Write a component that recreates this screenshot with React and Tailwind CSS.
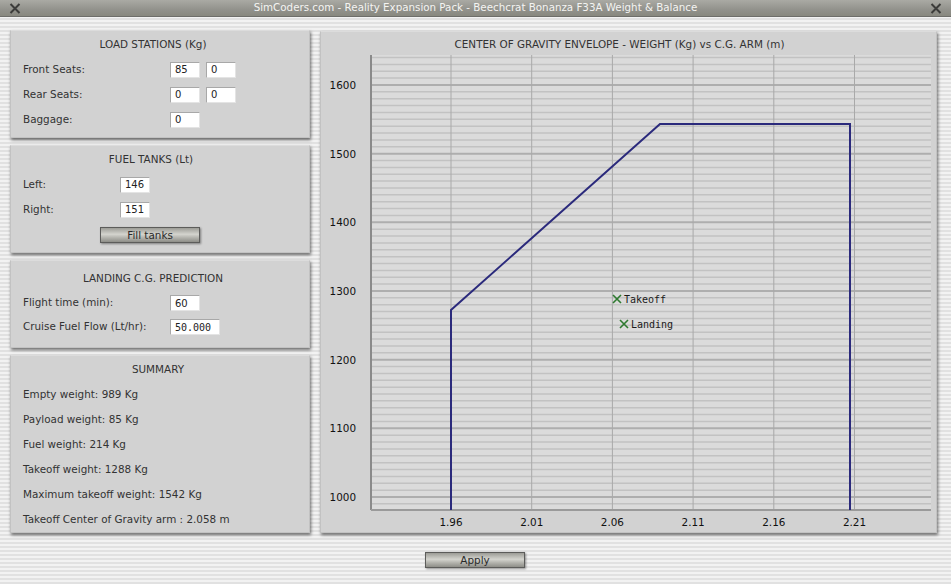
import React from "react"

const sans = "font-['DejaVu_Sans','Verdana',sans-serif]"
const mono = "font-['DejaVu_Sans_Mono','Liberation_Mono',monospace]"

// chart geometry (svg coords, origin = plot top-left minus 50px gutter)
const PL = 50
const PR = 610
const PT = 0
const PB = 455
const yOf = (w) => 442 - (w - 1000) * 0.6867
const xOf = (a) => 130 + (a - 1.96) * 1614

function TitleX() {
  return (
    <svg width="12" height="11" viewBox="0 0 12 11">
      <path d="M1.5 1 L10.5 10 M10.5 1 L1.5 10" stroke="#3c3c3a" strokeWidth="2" fill="none" />
    </svg>
  )
}

function Field({ value, w = "w-[30px]", font = sans }) {
  return (
    <input
      readOnly
      value={value}
      className={`${w} h-[16px] ${font} text-[10px] text-[#222] bg-white px-[4px] border border-[#a8a8a8] border-r-[#e4e4e4] border-b-[#e4e4e4] outline-none`}
    />
  )
}

function Panel({ className = "", children }) {
  return (
    <div className={`bg-[#d2d2d2] border border-[#c2c2c2] border-t-[#dcdcdc] shadow-[1px_2px_3px_rgba(0,0,0,0.55)] ${className}`}>
      {children}
    </div>
  )
}

function Btn({ children, w }) {
  return (
    <button className={`${w} h-[16px] text-[10.4px] leading-none text-[#2a2a2a] border border-[#5c5c5a] bg-[linear-gradient(#9c9c96,#d4d4ce_45%,#b2b2ac_70%,#8e8e88)] shadow-[1px_1px_2px_rgba(0,0,0,0.4)]`}>
      {children}
    </button>
  )
}

function Row({ label, labelW, children, h = "h-[25px]" }) {
  return (
    <div className={`${h} flex items-center px-[12px]`}>
      <div className={labelW}>{label}</div>
      <div className="flex gap-[6px]">{children}</div>
    </div>
  )
}

function Chart() {
  const minor = []
  for (let w = 990; w <= 1640; w += 10) minor.push(w)
  const xs = [1.96, 2.01, 2.06, 2.11, 2.16, 2.21]
  const env = [
    [130, PB],
    [130, 255],
    [339, 69],
    [529, 69],
    [529, PB],
  ]
  return (
    <svg width="617" height="478" className={sans}>
      <rect x={PL} y={PT} width={PR - PL} height={PB - PT} fill="#dbdbdb" />
      {minor.map((w) => (
        <line
          key={w}
          x1={PL}
          x2={PR}
          y1={yOf(w)}
          y2={yOf(w)}
          stroke={w % 100 === 0 ? "#aeaeae" : "#c2c2c2"}
          strokeWidth={w % 100 === 0 ? 2 : 1.5}
        />
      ))}
      {xs.map((a) => (
        <line key={a} x1={xOf(a)} x2={xOf(a)} y1={PT} y2={PB} stroke="#a9a9a9" strokeWidth="1" />
      ))}
      <line x1={PL} x2={PL} y1={PT} y2={PB} stroke="#8a8a8a" strokeWidth="2" />
      <line x1={PL} x2={PR} y1={PB} y2={PB} stroke="#9a9a9a" strokeWidth="2" />
      <polyline
        points={env.map((p) => p.join(",")).join(" ")}
        fill="none"
        stroke="#2b2a7c"
        strokeWidth="2"
      />
      {[1600, 1500, 1400, 1300, 1200, 1100, 1000].map((w) => (
        <text key={w} x="35" y={yOf(w) + 4} textAnchor="end" fontSize="10.4" fill="#111">
          {w}
        </text>
      ))}
      {xs.map((a) => (
        <text key={a} x={xOf(a)} y="471" textAnchor="middle" fontSize="10.4" fill="#111">
          {a.toFixed(2)}
        </text>
      ))}
      <path d="M292 240 L300 248 M300 240 L292 248" stroke="#2e7a30" strokeWidth="1.6" />
      <text x="303" y="248" fontSize="10" fill="#1a1a1a" className={mono}>
        Takeoff
      </text>
      <path d="M299 265 L307 273 M307 265 L299 273" stroke="#2e7a30" strokeWidth="1.6" />
      <text x="310" y="273" fontSize="10" fill="#1a1a1a" className={mono}>
        Landing
      </text>
    </svg>
  )
}

export default function App() {
  return (
    <div
      className={`w-[951px] h-[584px] overflow-hidden flex flex-col ${sans} text-[10.4px] text-[#333] bg-[repeating-linear-gradient(180deg,#f2f2f2_0px,#f2f2f2_2px,#e1e1e1_2px,#e1e1e1_4px)]`}
    >
      {/* title bar */}
      <div className="h-[17px] flex items-center justify-between px-[9px] bg-[linear-gradient(#aaaaa4,#92928c_60%,#88887f)] border-b border-[#6e6e6a]">
        <TitleX />
        <div className="text-[10.3px] text-[#f4f4f2]">
          SimCoders.com - Reality Expansion Pack - Beechcrat Bonanza F33A Weight &amp; Balance
        </div>
        <TitleX />
      </div>

      <div className="flex gap-[10px] pl-[10px] pt-[13px]">
        {/* left column */}
        <div className="w-[300px] flex flex-col gap-[7px]">
          <Panel className="h-[108px] pt-[1px]">
            <div className="h-[25px] flex items-center justify-center pr-[14px]">LOAD STATIONS (Kg)</div>
            <Row label="Front Seats:" labelW="w-[147px]">
              <Field value="85" />
              <Field value="0" />
            </Row>
            <Row label="Rear Seats:" labelW="w-[147px]">
              <Field value="0" />
              <Field value="0" />
            </Row>
            <Row label="Baggage:" labelW="w-[147px]">
              <Field value="0" />
            </Row>
          </Panel>

          <Panel className="h-[108px] pt-[1px]">
            <div className="h-[25px] flex items-center justify-center pr-[18px]">FUEL TANKS (Lt)</div>
            <Row label="Left:" labelW="w-[97px]">
              <Field value="146" />
            </Row>
            <Row label="Right:" labelW="w-[97px]">
              <Field value="151" />
            </Row>
            <div className="h-[26px] flex items-center pl-[89px]">
              <Btn w="w-[100px]">Fill tanks</Btn>
            </div>
          </Panel>

          <Panel className="h-[88px] pt-[6px]">
            <div className="h-[24px] flex items-center justify-center pr-[14px]">LANDING C.G. PREDICTION</div>
            <Row label="Flight time (min):" labelW="w-[147px]" h="h-[24px]">
              <Field value="60" />
            </Row>
            <Row label="Cruise Fuel Flow (Lt/hr):" labelW="w-[147px]" h="h-[24px]">
              <Field value="50.000" w="w-[50px]" font={mono} />
            </Row>
          </Panel>

          <Panel className="h-[178px] pt-[1px]">
            <div className="h-[25px] flex items-center justify-center pr-[4px]">SUMMARY</div>
            {[
              "Empty weight: 989 Kg",
              "Payload weight: 85 Kg",
              "Fuel weight: 214 Kg",
              "Takeoff weight: 1288 Kg",
              "Maximum takeoff weight: 1542 Kg",
              "Takeoff Center of Gravity arm : 2.058 m",
            ].map((t) => (
              <div key={t} className="h-[25px] flex items-center px-[12px]">
                {t}
              </div>
            ))}
          </Panel>
        </div>

        {/* chart panel */}
        <Panel className="w-[617px] h-[502px] mt-[1px] flex flex-col">
          <div className="h-[23px] pt-[2px] flex items-center justify-center pr-[18px]">
            CENTER OF GRAVITY ENVELOPE - WEIGHT (Kg) vs C.G. ARM (m)
          </div>
          <Chart />
        </Panel>
      </div>

      <div className="flex pl-[425px] pt-[19px]">
        <Btn w="w-[100px]">Apply</Btn>
      </div>
    </div>
  )
}
